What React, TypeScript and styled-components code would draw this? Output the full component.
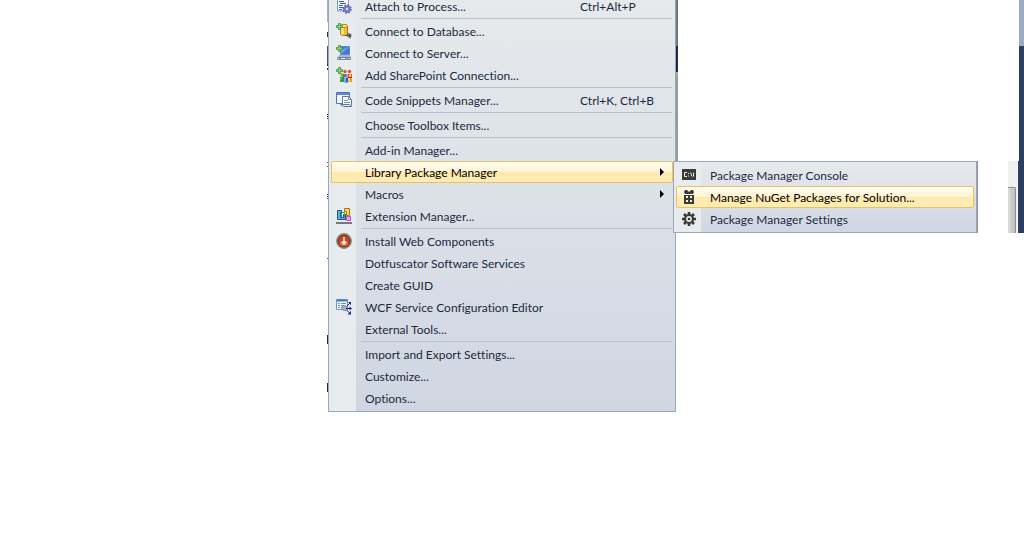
import React from 'react';
import styled, { createGlobalStyle, css } from 'styled-components';

const GlobalStyle = createGlobalStyle`
  * { box-sizing: border-box; }
  body {
    margin: 0;
    background: #fff;
    font-family: Lato, 'Open Sans', sans-serif;
    font-size: 12px;
    font-variant-ligatures: none;
    color: #1b293e;
  }
`;

const Desktop = styled.main`
  position: relative;
  min-height: 100vh;
  overflow: hidden;
`;

const WindowEdge = styled.div`
  display: flex;
  flex-direction: column;
  align-items: flex-end;
`;

const FrameTop = styled.div`
  width: 5px;
  height: 46px;
  background: #9babc6;
`;

const FrameSide = styled.div`
  width: 5px;
  height: 115px;
  background: #2b3f61;
`;

const FrameBottom = styled.div`
  display: flex;
  width: 16px;
  height: 72px;
  background: #2b3f61;
`;

const ScrollTrack = styled.div`
  width: 10px;
  padding-top: 26px;
  background: #f0f0f0;
  border-right: 1px solid #fafafa;
`;

const ScrollThumb = styled.div`
  width: 8px;
  height: 46px;
  background: linear-gradient(90deg, #dcdcde, #bebec2);
  border: solid #8f8f92;
  border-width: 1px 1px 0 0;
  border-top-right-radius: 2px;
`;

const menuSurface = css`
  position: absolute;
  margin: 0;
  padding: 2px;
  list-style: none;
  border: 1px solid #9ba7b7;
  background:
    linear-gradient(#e9ecee, #e9ecee) 0 0 / 27px 100% no-repeat,
    linear-gradient(#e6eaec, #dce1e8 50%, #d0d6e2);
`;

const MainMenu = styled.ul`
  ${menuSurface}
  top: -8px;
  left: 328px;
  width: 348px;
`;

const SubMenu = styled.ul`
  ${menuSurface}
  top: 0;
  left: 100%;
  width: 304px;
  z-index: 2;
  box-shadow: 1px 0 0 #8b929c;
`;

const Shadow = styled.div`
  position: absolute;
  top: 0;
  left: 676px;
  width: 2px;
  height: 161px;
  background: linear-gradient(#6b7689 46px, #1d2c47 46px 72px, #c2a569 72px 76px, #999a9d 76px);
`;

const Fragments = styled.svg`
  position: absolute;
  top: 0;
  left: 327px;
`;

const Row = styled.li`
  position: relative;
  display: flex;
`;

const MenuButton = styled.button<{ $active?: boolean }>`
  display: flex;
  align-items: center;
  width: 100%;
  height: 22px;
  padding: 0 8px 0 4px;
  border: 1px solid ${p => (p.$active ? '#e5c365' : 'transparent')};
  border-radius: 2px;
  background: ${p => (p.$active ? 'linear-gradient(#fffcf0, #fff3d2 48%, #ffe9ae 52%, #ffecb5)' : 'transparent')};
  color: ${p => (p.$active ? '#000' : 'inherit')};
  font: inherit;
  font-variant-ligatures: none;
  line-height: 14px;
  text-align: left;
  white-space: nowrap;
`;

const IconSlot = styled.span`
  display: flex;
  flex: none;
  width: 29px;
`;

const Label = styled.span`
  flex: 1;
  padding-top: 2px;
`;

const Shortcut = styled.span`
  width: 84px;
  padding-top: 2px;
`;

const Separator = styled.li`
  height: 3px;
  margin: 0 1px 0 30px;
  padding-top: 1px;
  &::before {
    content: '';
    display: block;
    height: 1px;
    background: #b9c0cd;
  }
`;

const Svg = ({ children }: { children: React.ReactNode }) => (
  <svg width="16" height="16" viewBox="0 0 16 16" aria-hidden="true">{children}</svg>
);

const Plus = () => (
  <path d="M2.500 .5h2v2h2v2h-2v2h-2v-2h-2v-2h2z" fill="#8ad072" stroke="#3a8f3c" strokeWidth=".8" />
);

const ProcessIcon = () => (
  <Svg>
    <path d="M1.500 0h9l2 2v11h-11z" fill="#f8fbff" stroke="#7b9bd0" />
    <path d="M3 3.500h5M4 5.500h6M3 7.500h4M3 9.500h4M3 11.500h3" stroke="#2f5bb5" />
    <circle cx="11" cy="11" r="3.600" fill="#7a7fc4" stroke="#595da6" strokeWidth="2.200" strokeDasharray="1.700 1.100" />
    <circle cx="11" cy="11" r="3.600" fill="#777cc2" />
    <circle cx="11" cy="11" r="1.200" fill="#dfe2f5" />
  </Svg>
);

const DatabaseIcon = () => (
  <Svg>
    <path d="M4.500 3v8c0 2 7 2 7 0V3z" fill="#f2bd2c" stroke="#b78010" />
    <path d="M5.500 4v7.500h2V4z" fill="#fff0a0" />
    <ellipse cx="8" cy="3" rx="3.500" ry="1.700" fill="#ffe480" stroke="#b78010" />
    <path d="M9 12.500h3M12 10.500l3 1v2l-2 1-1.500-1.500z" fill="#55585e" stroke="#55585e" />
    <path d="M14 14v2M12 11.500h1" stroke="#85898f" />
    <Plus />
  </Svg>
);

const ServerIcon = () => (
  <Svg>
    <path d="M4.500 1.500h9v8h-9z" fill="#3c7ddb" stroke="#6685b8" />
    <path d="M5 9V5l7-3h1z" fill="#6ba4ee" />
    <path d="M3 10h11l1 2H2z" fill="#aab6ca" />
    <path d="M1.500 12.500h13v2h-13z" fill="#e4e8f0" stroke="#7788a4" />
    <path d="M3 13.500h2" stroke="#37a848" />
    <path d="M9 13.500h4" stroke="#8c99af" />
    <Plus />
  </Svg>
);

const SharePointIcon = () => (
  <Svg>
    <circle cx="9" cy="4.500" r="1.700" fill="#e8523a" />
    <path d="M7 7h4v3H7z" fill="#d32b20" />
    <circle cx="13.500" cy="4.500" r="1.800" fill="#f04f35" />
    <path d="M12 7h4v4h-4z" fill="#c9251b" />
    <circle cx="6" cy="8" r="1.700" fill="#52b84c" />
    <path d="M4 10h4v5H4z" fill="#299b2e" />
    <circle cx="10.200" cy="8.500" r="1.700" fill="#5595ec" />
    <path d="M8.500 10.500h3.500v5H8.500z" fill="#2463cc" />
    <circle cx="14" cy="8.500" r="1.600" fill="#ffd75a" />
    <path d="M12.500 11H16v4h-3.500z" fill="#e7a61b" />
    <path d="M5 10.500v3M9.500 11v4M13.500 11v3" stroke="#fff" strokeOpacity=".45" />
    <Plus />
  </Svg>
);

const SnippetsIcon = () => (
  <Svg>
    <path d="M.5 .5h13v11H.5z" fill="#f7faff" stroke="#4774c4" />
    <path d="M1 2h12" stroke="#5b8bdf" strokeWidth="2" />
    <path d="M6.500 4.500h6l3 3v6h-9z" fill="#fff" stroke="#627797" />
    <path d="M12.500 4.500v3h3M8 8.500h4M8 10.500h6" stroke="#7b92b5" fill="none" />
    <path d="M4.500 12.500h9l2 2h-8z" fill="#e4ebf5" stroke="#627797" />
  </Svg>
);

const ExtensionIcon = () => (
  <Svg>
    <path d="M1.500 2.500h4v2h-1v5h3v-3h2v5h-8z" fill="#63b0ed" stroke="#175596" />
    <path d="M5.500 9V4.500h3v5" fill="none" stroke="#3f9b55" />
    <path d="M8.500 .5h5v7h-3v-4h-2z" fill="#ffd55a" stroke="#a1780f" />
    <path d="M10.500 8.500h4v4h-4z" fill="#f6a4ed" stroke="#c54bba" />
    <path d="M0 15h16" stroke="#77787b" strokeWidth="2" />
  </Svg>
);

const InstallIcon = () => (
  <Svg>
    <circle cx="8" cy="8" r="7.200" fill="#b5482a" stroke="#8a8582" strokeWidth="1.500" />
    <circle cx="8" cy="8" r="5.800" fill="#b9461f" stroke="#7c3422" />
    <path d="M3.500 9.500a4.700 4.700 0 0 0 9 0z" fill="#ef7838" />
    <path d="M7.300 4h1.400v4.500H11L8 12 5 8.500h2.300z" fill="#fff" />
  </Svg>
);

const WcfIcon = () => (
  <Svg>
    <path d="M.5 .5h11v10H.5z" fill="#f4f8ff" stroke="#6c91cf" />
    <path d="M1 1.500h10" stroke="#4778cf" strokeWidth="2" />
    <path d="M2 4.500h2M5 4.500h5M2 6.500h2M5 6.500h3M2 8.500h2M5 8.500h2" stroke="#6a8fcc" />
    <circle cx="8.500" cy="9" r="2.600" fill="#a6afc3" stroke="#7f8baa" />
    <path d="M11 7l3-3M10 9.500h5M10.500 11l4 4" fill="none" stroke="#1a24a0" />
    <path d="M12 3h3v3zM13.500 7.500l2.500 2-2.500 2zM15 12v3.500h-3.500z" fill="#1a24a0" />
  </Svg>
);

const ConsoleIcon = () => (
  <Svg>
    <path d="M1 2h14v11H1z" fill="#3a3a3a" />
    <path d="M6 5.500H3.500v4H6M7.500 6v1M7.500 8.500v1M9.500 5.500l1.500 4M12.500 5.500v4" fill="none" stroke="#fff" strokeWidth=".9" />
  </Svg>
);

const PackageIcon = () => (
  <Svg>
    <path d="M4 1h2l2 2 2-2h2l1 2-1 2H4L3 3z" fill="#3a3a3a" />
    <path d="M3 6h10v9H3z" fill="#3a3a3a" />
    <path d="M5 7h2v2H5zM9 7h2v2H9zM5 11h2v2H5zM9 11h2v2H9z" fill="#fff3cf" />
  </Svg>
);

const SettingsIcon = () => (
  <Svg>
    <path d="M8 1v14M1 8h14M3 3l10 10M13 3L3 13" stroke="#3a3a3a" strokeWidth="2.600" />
    <circle cx="8" cy="8" r="4" fill="#e9ecee" stroke="#3a3a3a" strokeWidth="2.200" />
    <circle cx="8" cy="8" r="1.300" fill="#3a3a3a" />
  </Svg>
);

const Arrow = () => (
  <svg width="4" height="8" viewBox="0 0 4 8" aria-hidden="true">
    <path d="M0 0l4 4-4 4z" fill="#000" />
  </svg>
);

type Entry = {
  label: string;
  icon?: React.ReactNode;
  shortcut?: string;
  active?: boolean;
  arrow?: boolean;
  children?: Entry[];
};

const groups: Entry[][] = [
  [{ label: 'Attach to Process...', icon: <ProcessIcon />, shortcut: 'Ctrl+Alt+P' }],
  [
    { label: 'Connect to Database...', icon: <DatabaseIcon /> },
    { label: 'Connect to Server...', icon: <ServerIcon /> },
    { label: 'Add SharePoint Connection...', icon: <SharePointIcon /> },
  ],
  [{ label: 'Code Snippets Manager...', icon: <SnippetsIcon />, shortcut: 'Ctrl+K, Ctrl+B' }],
  [{ label: 'Choose Toolbox Items...' }],
  [
    { label: 'Add-in Manager...' },
    {
      label: 'Library Package Manager',
      active: true,
      arrow: true,
      children: [
        { label: 'Package Manager Console', icon: <ConsoleIcon /> },
        { label: 'Manage NuGet Packages for Solution...', icon: <PackageIcon />, active: true },
        { label: 'Package Manager Settings', icon: <SettingsIcon /> },
      ],
    },
    { label: 'Macros', arrow: true },
    { label: 'Extension Manager...', icon: <ExtensionIcon /> },
  ],
  [
    { label: 'Install Web Components', icon: <InstallIcon /> },
    { label: 'Dotfuscator Software Services' },
    { label: 'Create GUID' },
    { label: 'WCF Service Configuration Editor', icon: <WcfIcon /> },
    { label: 'External Tools...' },
  ],
  [{ label: 'Import and Export Settings...' }, { label: 'Customize...' }, { label: 'Options...' }],
];

const MenuItem = ({ entry }: { entry: Entry }) => (
  <Row role="none">
    <MenuButton type="button" role="menuitem" $active={entry.active} aria-haspopup={entry.arrow ? 'menu' : undefined}>
      <IconSlot>{entry.icon}</IconSlot>
      <Label>{entry.label}</Label>
      {entry.shortcut && <Shortcut>{entry.shortcut}</Shortcut>}
      {entry.arrow && <Arrow />}
    </MenuButton>
    {entry.children && (
      <SubMenu role="menu" aria-label={entry.label}>
        {entry.children.map(child => <MenuItem key={child.label} entry={child} />)}
      </SubMenu>
    )}
  </Row>
);

export default function App() {
  return (
    <Desktop>
      <GlobalStyle />
      <WindowEdge>
        <FrameTop />
        <FrameSide />
        <FrameBottom>
          <ScrollTrack>
            <ScrollThumb />
          </ScrollTrack>
        </FrameBottom>
      </WindowEdge>
      <Fragments width="1" height="400" aria-hidden="true">
        <path d="M0 0h1v22h-1z" fill="#a5b2c8" />
        <path d="M0 46h1v18h-1z" fill="#4b5468" />
        <path d="M0 32h1v5h-1zM0 64h1v2h-1zM0 68h1v2h-1z" fill="#521c3c" />
        <path d="M0 114h1v1h-1zM0 116h1v1h-1zM0 118h1v1h-1z" fill="#111" />
        <path d="M0 162h1v1h-1zM0 166h1v1h-1zM0 258h1v1h-1z" fill="#a33b3b" />
        <path d="M0 194h1v1h-1zM0 196h1v1h-1zM0 198h1v1h-1z" fill="#2626d8" />
        <path d="M0 335h1v9h-1zM0 383h1v9h-1z" fill="#3b2420" />
      </Fragments>
      <Shadow />
      <MainMenu role="menu" aria-label="Tools">
        {groups.map((group, index) => (
          <React.Fragment key={group[0].label}>
            {index > 0 && <Separator role="separator" />}
            {group.map(entry => <MenuItem key={entry.label} entry={entry} />)}
          </React.Fragment>
        ))}
      </MainMenu>
    </Desktop>
  );
}
